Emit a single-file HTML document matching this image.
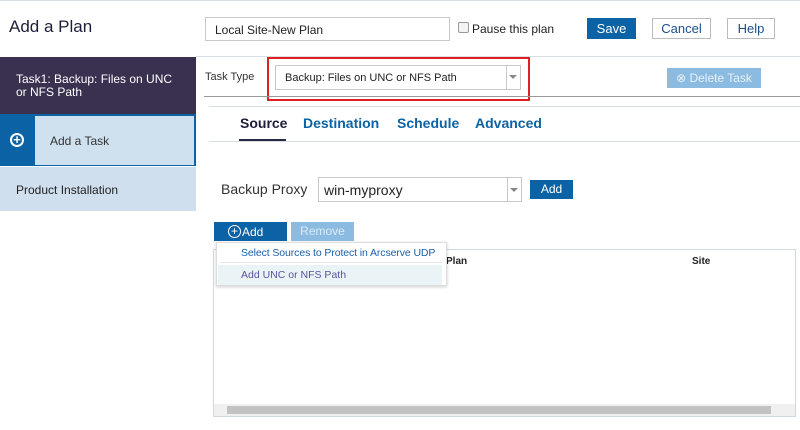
<!DOCTYPE html>
<html><head><style>
*{margin:0;padding:0;box-sizing:border-box}
body{width:800px;height:430px;background:#fff;font-family:"Liberation Sans",Arial,sans-serif;position:relative;overflow:hidden;font-size:12px;color:#222}
.a{position:absolute}
.btn{position:absolute;text-align:center;font-size:13px}
</style></head><body>
<div class="a" style="left:0;top:0;width:800px;height:1px;background:#d8dde3"></div>
<div class="a" style="left:9px;top:17px;font-size:17px;color:#1d1d3a">Add a Plan</div>
<div class="a" style="left:205px;top:17px;width:245px;height:24px;border:1px solid #c8c8c8;padding:5px 9px;font-size:12px">Local Site-New Plan</div>
<div class="a" style="left:458px;top:22px;width:11px;height:11px;border:1px solid #999;border-radius:2px;background:#f4f4f4"></div>
<div class="a" style="left:472px;top:22px;font-size:12px">Pause this plan</div>
<div class="btn" style="left:587px;top:18px;width:49px;height:21px;background:#0b63a5;color:#fff;line-height:21px">Save</div>
<div class="btn" style="left:652px;top:18px;width:59px;height:21px;border:1px solid #bbb;color:#1a4f8a;line-height:19px">Cancel</div>
<div class="btn" style="left:727px;top:18px;width:48px;height:21px;border:1px solid #bbb;color:#1a4f8a;line-height:19px">Help</div>
<div class="a" style="left:196px;top:56px;width:604px;height:1px;background:#d8dde3"></div>

<div class="a" style="left:0;top:57px;width:196px;height:57px;background:#3a3050;color:#fff;padding:16px 16px;font-size:12px;line-height:13px">Task1: Backup: Files on UNC<br>or NFS Path</div>
<div class="a" style="left:0;top:114px;width:196px;height:52px;background:#0b63a5"></div>
<div class="a" style="left:35px;top:116px;width:159px;height:49px;background:#cfe0ef"></div>
<div class="a" style="left:10px;top:133px;width:14px;height:14px;border:2px solid #fff;border-radius:50%;color:#fff;font-size:13px;font-weight:bold;line-height:10px;text-align:center">+</div>
<div class="a" style="left:50px;top:134px;color:#333">Add a Task</div>
<div class="a" style="left:0;top:167px;width:196px;height:44px;background:#cfdfee;padding:16px;color:#222">Product Installation</div>

<div class="a" style="left:205px;top:71px;font-size:11px;color:#333">Task Type</div>
<div class="a" style="left:275px;top:65px;width:246px;height:25px;border:1px solid #c8c8c8;padding:6px 9px;font-size:11px">Backup: Files on UNC or NFS Path</div>
<div class="a" style="left:506px;top:65px;width:1px;height:25px;background:#c8c8c8"></div>
<div class="a" style="left:509px;top:75px;border-left:4px solid transparent;border-right:4px solid transparent;border-top:4px solid #888"></div>
<div class="a" style="left:267px;top:57px;width:263px;height:44px;border:2px solid #e02020"></div>
<div class="btn" style="left:667px;top:68px;width:94px;height:20px;background:#8bbbe0;color:#e8f2fa;line-height:20px;font-size:12px">&#x2297; Delete Task</div>
<div class="a" style="left:204px;top:96px;width:596px;height:1px;background:#999"></div>
<div class="a" style="left:209px;top:106px;width:591px;height:1px;background:#d8dde3"></div>
<div class="a" style="left:240px;top:115px;font-size:14px;font-weight:bold;color:#1d1d3a">Source</div>
<div class="a" style="left:303px;top:115px;font-size:14px;font-weight:bold;color:#0b63a5">Destination</div>
<div class="a" style="left:397px;top:115px;font-size:14px;font-weight:bold;color:#0b63a5">Schedule</div>
<div class="a" style="left:475px;top:115px;font-size:14px;font-weight:bold;color:#0b63a5">Advanced</div>
<div class="a" style="left:209px;top:141px;width:591px;height:1px;background:#d8dde3"></div>
<div class="a" style="left:239px;top:139px;width:47px;height:2px;background:#2a2a45"></div>

<div class="a" style="left:221px;top:181px;font-size:14px;color:#333">Backup Proxy</div>
<div class="a" style="left:318px;top:177px;width:204px;height:25px;border:1px solid #c8c8c8;padding:4px 5px;font-size:14px">win-myproxy</div>
<div class="a" style="left:507px;top:177px;width:1px;height:25px;background:#c8c8c8"></div>
<div class="a" style="left:510px;top:188px;border-left:4px solid transparent;border-right:4px solid transparent;border-top:4px solid #888"></div>
<div class="btn" style="left:530px;top:180px;width:43px;height:19px;background:#0b63a5;color:#fff;line-height:19px;font-size:12px">Add</div>

<div class="a" style="left:213px;top:249px;width:583px;height:168px;border:1px solid #d0d8e0"></div>
<div class="a" style="left:446px;top:256px;font-size:10px;font-weight:bold">Plan</div>
<div class="a" style="left:692px;top:256px;font-size:10px;font-weight:bold">Site</div>
<div class="a" style="left:214px;top:404px;width:581px;height:12px;background:#f0f0f0"></div>
<div class="a" style="left:227px;top:406px;width:544px;height:8px;background:#c2c2c2"></div>

<div class="a" style="left:214px;top:222px;width:73px;height:19px;background:#0b63a5"></div>
<div class="a" style="left:228px;top:225px;width:13px;height:13px;border:1.5px solid #fff;border-radius:50%;color:#fff;font-size:12px;line-height:10px;text-align:center">+</div>
<div class="a" style="left:242px;top:225px;color:#fff;font-size:12px">Add</div>
<div class="btn" style="left:291px;top:222px;width:63px;height:19px;background:#8bbbe0;color:#dceaf5;line-height:19px;font-size:12px">Remove</div>
<div class="a" style="left:216px;top:242px;width:231px;height:44px;background:#fff;border:1px solid #ddd;box-shadow:0 1px 3px rgba(0,0,0,.2)"></div>
<div class="a" style="left:241px;top:247px;font-size:10.5px;color:#1a5fa8;letter-spacing:-0.1px">Select Sources to Protect in Arcserve UDP</div>
<div class="a" style="left:221px;top:262px;width:221px;height:1px;background:#e4e4e4"></div>
<div class="a" style="left:218px;top:265px;width:224px;height:20px;background:#eaf3f6"></div>
<div class="a" style="left:241px;top:269px;font-size:10.5px;color:#5a55a0">Add UNC or NFS Path</div>
</body></html>
